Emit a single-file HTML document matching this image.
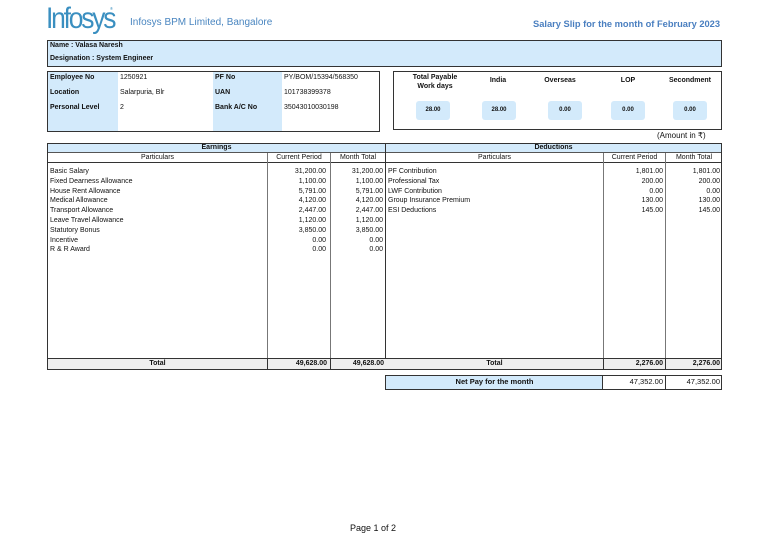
<!DOCTYPE html><html><head><meta charset="utf-8"><style>
*{margin:0;padding:0;box-sizing:border-box}
body{width:768px;height:543px;background:#fff;position:relative;font-family:"Liberation Sans",sans-serif;overflow:hidden;color:#111}
.a{position:absolute;white-space:nowrap}
.s{font-size:7px;font-family:"Liberation Sans Narrow","Liberation Sans",sans-serif}
.b{font-weight:bold}
.box{position:absolute;border:1px solid #333}
.lb{background:#d3eafb}
.r{text-align:right}
.c{text-align:center}
.pill{position:absolute;background:#d3eafb;border-radius:3px;width:34px;height:19px;font-size:6px;font-weight:bold;text-align:center;line-height:19px;top:101px}
</style></head><body>
<div class="a" style="left:46px;top:2px;font-size:30px;color:#3a8fc0;letter-spacing:-2.5px;transform:scaleX(0.88);transform-origin:left">Infosys</div>
<div class="a" style="left:110px;top:6px;font-size:4px;color:#2a86b8">®</div>
<div class="a" style="left:130px;top:17px;font-size:10px;color:#4a86c0">Infosys BPM Limited, Bangalore</div>
<div class="a b" style="left:533px;top:19px;font-size:9.3px;color:#4a7fc0">Salary Slip for the month of February 2023</div>

<div class="box lb" style="left:47px;top:40px;width:675px;height:27px"></div>
<div class="a s b" style="left:50px;top:42px">Name : Valasa Naresh</div>
<div class="a s b" style="left:50px;top:55px">Designation : System Engineer</div>

<div class="box" style="left:47px;top:71px;width:333px;height:61px"></div>
<div class="a lb" style="left:48px;top:72px;width:70px;height:59px"></div>
<div class="a lb" style="left:213px;top:72px;width:69px;height:59px"></div>
<div class="a s b" style="left:50px;top:74px">Employee No</div>
<div class="a s b" style="left:50px;top:89px">Location</div>
<div class="a s b" style="left:50px;top:104px">Personal Level</div>
<div class="a s" style="left:120px;top:74px">1250921</div>
<div class="a s" style="left:120px;top:89px">Salarpuria, Blr</div>
<div class="a s" style="left:120px;top:104px">2</div>
<div class="a s b" style="left:215px;top:74px">PF No</div>
<div class="a s b" style="left:215px;top:89px">UAN</div>
<div class="a s b" style="left:215px;top:104px">Bank A/C No</div>
<div class="a s" style="left:284px;top:74px">PY/BOM/15394/568350</div>
<div class="a s" style="left:284px;top:89px">101738399378</div>
<div class="a s" style="left:284px;top:104px">35043010030198</div>

<div class="box" style="left:393px;top:71px;width:329px;height:59px"></div>
<div class="a s b c" style="left:400px;top:73px;width:70px;line-height:9px">Total Payable<br>Work days</div>
<div class="a s b c" style="left:480px;top:77px;width:36px">India</div>
<div class="a s b c" style="left:540px;top:77px;width:40px">Overseas</div>
<div class="a s b c" style="left:610px;top:77px;width:36px">LOP</div>
<div class="a s b c" style="left:660px;top:77px;width:60px">Secondment</div>
<div class="pill" style="left:416px">28.00</div>
<div class="pill" style="left:482px">28.00</div>
<div class="pill" style="left:548px">0.00</div>
<div class="pill" style="left:611px">0.00</div>
<div class="pill" style="left:673px">0.00</div>
<div class="a" style="left:657px;top:131px;font-size:8px">(Amount in ₹)</div>

<div class="box" style="left:47px;top:143px;width:675px;height:227px"></div>
<div class="a lb" style="left:48px;top:144px;width:673px;height:9px;border-bottom:1px solid #555"></div>
<div class="a" style="left:385px;top:143px;width:1px;height:227px;background:#333"></div>
<div class="a" style="left:48px;top:162px;width:673px;height:1px;background:#333"></div>
<div class="a" style="left:267px;top:153px;width:1px;height:206px;background:#777"></div>
<div class="a" style="left:330px;top:153px;width:1px;height:206px;background:#777"></div>
<div class="a" style="left:603px;top:153px;width:1px;height:206px;background:#777"></div>
<div class="a" style="left:665px;top:153px;width:1px;height:206px;background:#777"></div>
<div class="a" style="left:48px;top:358px;width:673px;height:11px;background:#eee;border-top:1px solid #333"></div>
<div class="a" style="left:267px;top:359px;width:1px;height:11px;background:#333"></div>
<div class="a" style="left:330px;top:359px;width:1px;height:11px;background:#333"></div>
<div class="a" style="left:603px;top:359px;width:1px;height:11px;background:#333"></div>
<div class="a" style="left:665px;top:359px;width:1px;height:11px;background:#333"></div>
<div class="a s b c" style="left:48px;top:144px;width:337px">Earnings</div>
<div class="a s b c" style="left:386px;top:144px;width:335px">Deductions</div>
<div class="a s c" style="left:48px;top:154px;width:219px">Particulars</div>
<div class="a s c" style="left:268px;top:154px;width:62px">Current Period</div>
<div class="a s c" style="left:331px;top:154px;width:54px">Month Total</div>
<div class="a s c" style="left:386px;top:154px;width:217px">Particulars</div>
<div class="a s c" style="left:604px;top:154px;width:61px">Current Period</div>
<div class="a s c" style="left:666px;top:154px;width:56px">Month Total</div>

<div class="a s" style="left:50px;top:167px;line-height:9.8px">Basic Salary<br>Fixed Dearness Allowance<br>House Rent Allowance<br>Medical Allowance<br>Transport Allowance<br>Leave Travel Allowance<br>Statutory Bonus<br>Incentive<br>R &amp; R Award</div>
<div class="a s r" style="left:268px;top:167px;width:58px;line-height:9.8px">31,200.00<br>1,100.00<br>5,791.00<br>4,120.00<br>2,447.00<br>1,120.00<br>3,850.00<br>0.00<br>0.00</div>
<div class="a s r" style="left:331px;top:167px;width:52px;line-height:9.8px">31,200.00<br>1,100.00<br>5,791.00<br>4,120.00<br>2,447.00<br>1,120.00<br>3,850.00<br>0.00<br>0.00</div>
<div class="a s" style="left:388px;top:167px;line-height:9.8px">PF Contribution<br>Professional Tax<br>LWF Contribution<br>Group Insurance Premium<br>ESI Deductions</div>
<div class="a s r" style="left:604px;top:167px;width:59px;line-height:9.8px">1,801.00<br>200.00<br>0.00<br>130.00<br>145.00</div>
<div class="a s r" style="left:666px;top:167px;width:54px;line-height:9.8px">1,801.00<br>200.00<br>0.00<br>130.00<br>145.00</div>

<div class="a s b c" style="left:48px;top:360px;width:219px">Total</div>
<div class="a s b r" style="left:268px;top:360px;width:59px">49,628.00</div>
<div class="a s b r" style="left:331px;top:360px;width:53px">49,628.00</div>
<div class="a s b c" style="left:386px;top:360px;width:217px">Total</div>
<div class="a s b r" style="left:604px;top:360px;width:59px">2,276.00</div>
<div class="a s b r" style="left:666px;top:360px;width:54px">2,276.00</div>

<div class="box" style="left:385px;top:375px;width:337px;height:15px"></div>
<div class="a lb" style="left:386px;top:376px;width:217px;height:13px;border-right:1px solid #333"></div>
<div class="a" style="left:665px;top:375px;width:1px;height:15px;background:#333"></div>
<div class="a b c" style="left:386px;top:377px;width:217px;font-size:7.5px">Net Pay for the month</div>
<div class="a r" style="left:604px;top:377px;width:59px;font-size:7.5px">47,352.00</div>
<div class="a r" style="left:666px;top:377px;width:54px;font-size:7.5px">47,352.00</div>

<div class="a" style="left:350px;top:523px;font-size:9px">Page 1 of 2</div>
</body></html>
